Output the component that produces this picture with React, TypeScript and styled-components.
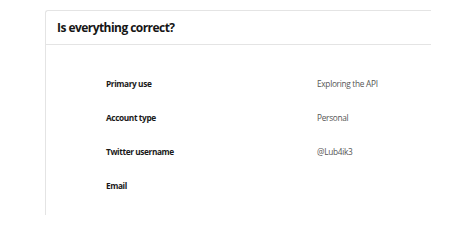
import React from "react";
import styled, { createGlobalStyle } from "styled-components";

const Global = createGlobalStyle`
  html, body { margin: 0; padding: 0; background: #ffffff; }
  body { font-family: "Open Sans", "Noto Sans", sans-serif; }
`;

const Page = styled.div`
  padding: 10px 0 0 45px;
  width: 474px;
  height: 215px;
  box-sizing: border-box;
  overflow: hidden;
`;

const Card = styled.section`
  width: 385px;
  border: 1px solid #e4e4e4;
  border-right: none;
  border-bottom: none;
  border-radius: 3px 0 0 0;
  height: 230px;
`;

const Header = styled.header`
  height: 33px;
  display: flex;
  align-items: center;
  padding-left: 11px;
  border-bottom: 1px solid #e4e4e4;
`;

const Title = styled.h2`
  margin: 0;
  font-size: 12px;
  font-weight: 700;
  letter-spacing: -0.55px;
  color: #161616;
`;

const Body = styled.div`
  padding: 21px 0 0 60px;
  display: flex;
  flex-direction: column;
`;

const Row = styled.div`
  display: grid;
  grid-template-columns: 211px 1fr;
  height: 34px;
  align-items: center;
`;

const Label = styled.span`
  font-size: 8.3px;
  font-weight: 700;
  letter-spacing: -0.4px;
  color: #1a1a1a;
`;

const Value = styled.span`
  font-size: 8.3px;
  letter-spacing: -0.3px;
  color: #555555;
`;

const rows: [string, string][] = [
  ["Primary use", "Exploring the API"],
  ["Account type", "Personal"],
  ["Twitter username", "@Lub4ik3"],
  ["Email", ""],
];

export default function App() {
  return (
    <>
      <Global />
      <Page>
        <Card>
          <Header>
            <Title>Is everything correct?</Title>
          </Header>
          <Body>
            {rows.map(([l, v]) => (
              <Row key={l}>
                <Label>{l}</Label>
                <Value>{v}</Value>
              </Row>
            ))}
          </Body>
        </Card>
      </Page>
    </>
  );
}
